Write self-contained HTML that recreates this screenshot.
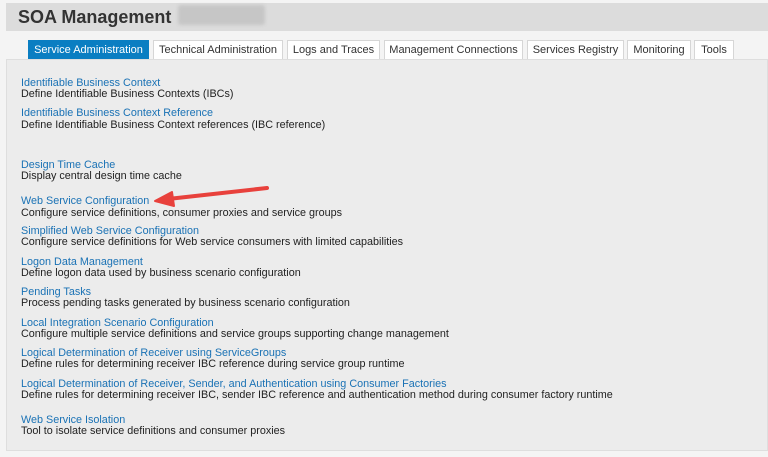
<!DOCTYPE html>
<html><head><style>
body{margin:0;width:768px;height:457px;background:#f4f4f4;font-family:"Liberation Sans",Arial,sans-serif;position:relative;overflow:hidden}
.hdr{position:absolute;left:6px;top:3px;width:762px;height:28px;background:#dcdcdc}
.title{position:absolute;left:18px;top:6px;font-size:18px;font-weight:bold;color:#333;line-height:22px}
.blur{position:absolute;left:178px;top:5px;width:87px;height:20px;background:#c6c6c6;filter:blur(1.5px);border-radius:3px}
.tab{position:absolute;top:40px;height:19px;background:#fff;border:1px solid #d6d6d6;border-bottom:none;font-size:11px;line-height:19px;color:#333;text-align:center;box-sizing:border-box;white-space:nowrap}
.tab.on{background:#0a7ec2;color:#fff;border-color:#0a7ec2}
.box{position:absolute;left:6px;top:59px;width:762px;height:392px;background:#ececec;border:1px solid #dedede;box-sizing:border-box}
.t{position:absolute;left:21px;font-size:10.8px;line-height:12px;white-space:nowrap}
.l{color:#1a72b5}.d{color:#222}
</style></head><body>
<div class="hdr"></div>
<div class="title">SOA Management</div>
<div class="blur"></div>
<div class="box"></div>
<div class="tab on" style="left:28px;width:121px">Service Administration</div>
<div class="tab" style="left:153px;width:130px">Technical Administration</div>
<div class="tab" style="left:287px;width:93px">Logs and Traces</div>
<div class="tab" style="left:384px;width:139px">Management Connections</div>
<div class="tab" style="left:527px;width:97px">Services Registry</div>
<div class="tab" style="left:627px;width:64px">Monitoring</div>
<div class="tab" style="left:694px;width:40px">Tools</div>

<div class="t l" style="top:77px">Identifiable Business Context</div>
<div class="t d" style="top:88px">Define Identifiable Business Contexts (IBCs)</div>
<div class="t l" style="top:107px">Identifiable Business Context Reference</div>
<div class="t d" style="top:119px">Define Identifiable Business Context references (IBC reference)</div>
<div class="t l" style="top:159px">Design Time Cache</div>
<div class="t d" style="top:170px">Display central design time cache</div>
<div class="t l" style="top:195px">Web Service Configuration</div>
<div class="t d" style="top:207px">Configure service definitions, consumer proxies and service groups</div>
<div class="t l" style="top:225px">Simplified Web Service Configuration</div>
<div class="t d" style="top:236px">Configure service definitions for Web service consumers with limited capabilities</div>
<div class="t l" style="top:256px">Logon Data Management</div>
<div class="t d" style="top:267px">Define logon data used by business scenario configuration</div>
<div class="t l" style="top:286px">Pending Tasks</div>
<div class="t d" style="top:297px">Process pending tasks generated by business scenario configuration</div>
<div class="t l" style="top:317px">Local Integration Scenario Configuration</div>
<div class="t d" style="top:328px">Configure multiple service definitions and service groups supporting change management</div>
<div class="t l" style="top:347px">Logical Determination of Receiver using ServiceGroups</div>
<div class="t d" style="top:358px">Define rules for determining receiver IBC reference during service group runtime</div>
<div class="t l" style="top:378px">Logical Determination of Receiver, Sender, and Authentication using Consumer Factories</div>
<div class="t d" style="top:389px">Define rules for determining receiver IBC, sender IBC reference and authentication method during consumer factory runtime</div>
<div class="t l" style="top:414px">Web Service Isolation</div>
<div class="t d" style="top:425px">Tool to isolate service definitions and consumer proxies</div>

<svg style="position:absolute;left:0;top:0" width="768" height="457">
<path d="M267 188 L168 199" stroke="#e8413c" stroke-width="4" stroke-linecap="round" fill="none"/>
<path d="M155 201 L172 192 L174 206 Z" fill="#e8413c" stroke="#e8413c" stroke-width="2" stroke-linejoin="round"/>
</svg>
</body></html>
